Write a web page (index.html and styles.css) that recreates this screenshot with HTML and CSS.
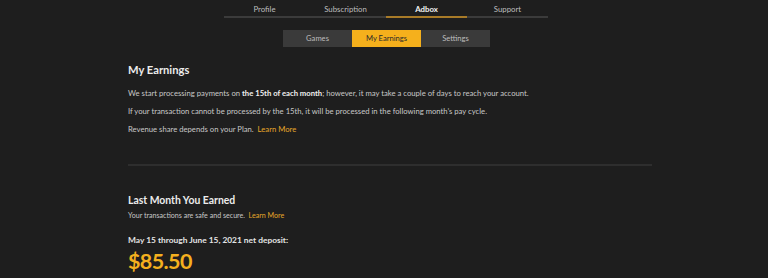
FILE: index.html
```html
<!DOCTYPE html>
<html>
<head>
<meta charset="utf-8">
<link rel="stylesheet" href="styles.css">
</head>
<body>
<nav class="topnav">
  <a class="tab">Profile</a>
  <a class="tab">Subscription</a>
  <a class="tab active">Adbox</a>
  <a class="tab">Support</a>
</nav>
<div class="subnav">
  <a class="sub">Games</a>
  <a class="sub active">My Earnings</a>
  <a class="sub">Settings</a>
</div>
<main class="content">
  <h1 class="title">My Earnings</h1>
  <p class="para">We start processing payments on <b>the 15th of each month</b>; however, it may take a couple of days to reach your account.</p>
  <p class="para">If your transaction cannot be processed by the 15th, it will be processed in the following month’s pay cycle.</p>
  <p class="para">Revenue share depends on your Plan.&nbsp; <a class="link">Learn More</a></p>
  <div class="divider"></div>
  <h2 class="title2">Last Month You Earned</h2>
  <p class="note">Your transactions are safe and secure.&nbsp; <a class="link">Learn More</a></p>
  <p class="period">May 15 through June 15, 2021 net deposit:</p>
  <p class="amount">$85.50</p>
</main>
</body>
</html>
```
FILE: styles.css
```css
* { box-sizing: border-box; }
html, body { margin: 0; padding: 0; }
body {
  background: #1e1e1e;
  color: #cfcfcf;
  font-family: "Lato", "Open Sans", sans-serif;
  width: 768px;
  height: 278px;
  overflow: hidden;
}
.topnav {
  display: flex;
  margin-left: 224px;
  width: 324px;
  border-bottom: 2px solid #3b3b3b;
}
.tab {
  flex: 1;
  text-align: center;
  font-size: 7.8px;
  padding-top: 2px;
  line-height: 14px;
  height: 16px;
  color: #bdbdbd;
}
.tab.active {
  color: #f2f2f2;
  font-weight: 700;
  border-bottom: 2px solid #a87b28;
  height: 18px;
  margin-bottom: -2px;
}
.subnav {
  display: flex;
  margin: 12px 0 0 283px;
}
.sub {
  width: 69px;
  height: 17px;
  line-height: 17px;
  text-align: center;
  font-size: 7.6px;
  background: #3a3a3a;
  color: #bdbdbd;
}
.sub.active {
  background: #f5b01c;
  color: #2a2a2a;
}
.content {
  margin-left: 128px;
  width: 524px;
}
.title {
  margin: 15px 0 0;
  font-size: 11.2px;
  line-height: 16px;
  font-weight: 700;
  color: #ececec;
}
.para {
  margin: 9px 0 0;
  font-size: 7.7px;
  line-height: 12px;
  color: #c8c8c8;
}
.para + .para { margin-top: 6px; }
.para b { color: #f0f0f0; font-weight: 700; }
.link { color: #e6a72a; }
.divider {
  height: 2px;
  background: #2e2e2e;
  margin-top: 29px;
}
.title2 {
  margin: 26px 0 0;
  font-size: 10.4px;
  line-height: 16px;
  font-weight: 700;
  color: #ececec;
}
.note {
  margin: 2px 0 0;
  font-size: 7.1px;
  line-height: 12px;
  color: #c8c8c8;
}
.period {
  margin: 11px 0 0;
  font-size: 8.4px;
  line-height: 14px;
  font-weight: 700;
  color: #e4e4e4;
}
.amount {
  margin: 1px 0 0;
  font-size: 21.5px;
  letter-spacing: -0.6px;
  line-height: 26px;
  font-weight: 700;
  color: #f4b01e;
}
```
